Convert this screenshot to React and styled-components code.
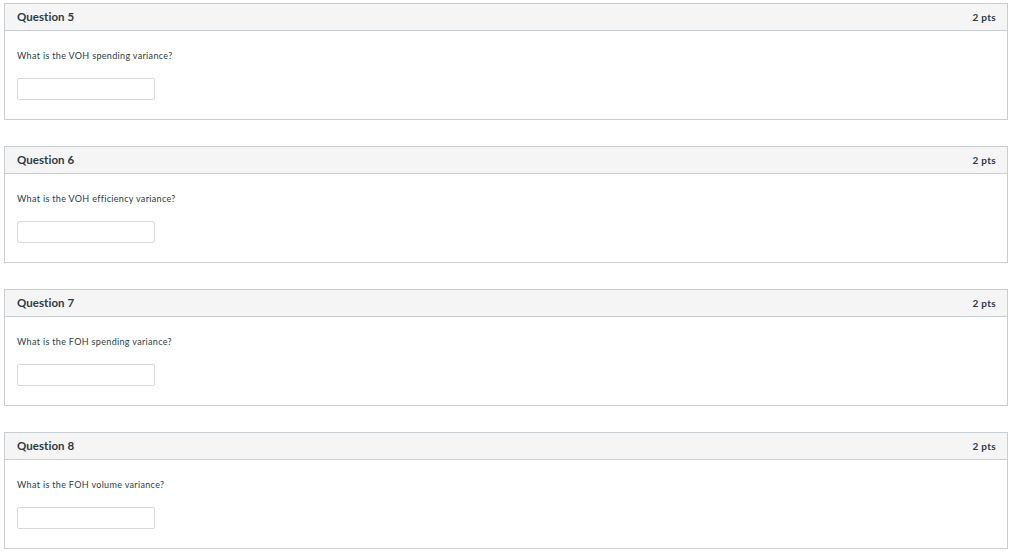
import React from "react";
import styled, { createGlobalStyle } from "styled-components";

const Global = createGlobalStyle`
  html, body { margin: 0; padding: 0; background: #fff; }
  body { font-family: Lato, "Open Sans", sans-serif; color: #2d3b45; }
`;

const Page = styled.div`
  padding: 3px 0 0 4px;
  width: 1004px;
  display: flex;
  flex-direction: column;
  gap: 26px;
`;

const Card = styled.section`
  border: 1px solid #c7cdd1;
  background: #fff;
`;

const Header = styled.header`
  height: 27px;
  box-sizing: border-box;
  padding: 0 11px 1px 12px;
  background: #f5f5f5;
  border-bottom: 1px solid #c7cdd1;
  display: flex;
  align-items: center;
  justify-content: space-between;
`;

const Title = styled.h2`
  margin: 0;
  font-size: 11.5px;
  font-weight: 700;
  color: #2d3b45;
  letter-spacing: 0.05px;
`;

const Points = styled.span`
  font-size: 10px;
  font-weight: 700;
  color: #2d3b45;
  letter-spacing: 0.3px;
`;

const Body = styled.div`
  padding: 19px 12px 19px 12px;
  display: flex;
  flex-direction: column;
  align-items: flex-start;
  gap: 16px;
`;

const Prompt = styled.p`
  margin: 0;
  font-size: 9px;
  line-height: 12px;
  letter-spacing: 0.33px;
  color: #2d3b45;
`;

const Answer = styled.input`
  width: 138px;
  height: 22px;
  box-sizing: border-box;
  border: 1px solid #d7dadd;
  border-radius: 2px;
  background: #fff;
  margin: 0;
  padding: 0 4px;
  font-family: inherit;
`;

const questions = [
  { n: 5, text: "What is the VOH spending variance?" },
  { n: 6, text: "What is the VOH efficiency variance?" },
  { n: 7, text: "What is the FOH spending variance?" },
  { n: 8, text: "What is the FOH volume variance?" },
];

export default function App() {
  return (
    <>
      <Global />
      <Page>
        {questions.map((q) => (
          <Card key={q.n}>
            <Header>
              <Title>Question {q.n}</Title>
              <Points>2 pts</Points>
            </Header>
            <Body>
              <Prompt>{q.text}</Prompt>
              <Answer type="text" aria-label={`Answer ${q.n}`} />
            </Body>
          </Card>
        ))}
      </Page>
    </>
  );
}
